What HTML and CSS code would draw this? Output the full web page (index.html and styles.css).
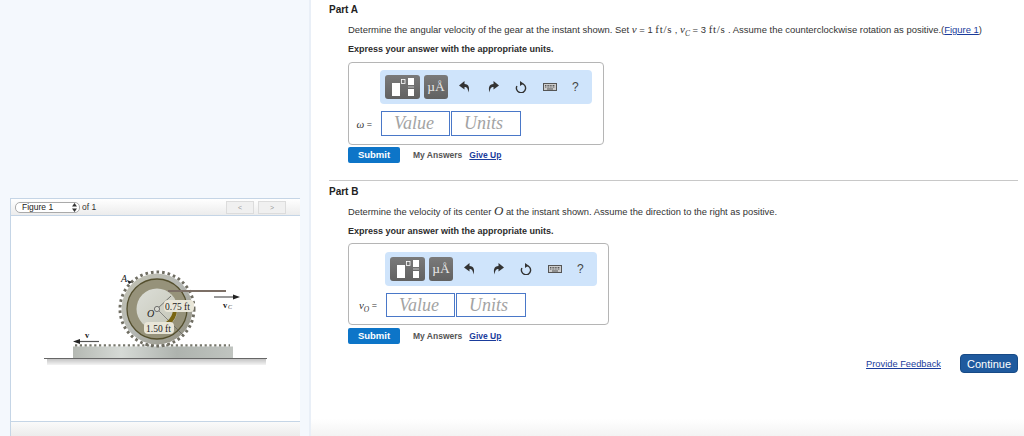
FILE: index.html
```html
<!DOCTYPE html>
<html lang="en">
<head>
  <meta charset="UTF-8" />
  <title>Part A</title>
  <link rel="stylesheet" href="styles.css">
</head>
<body>
  <aside class="figure-panel">
    <div class="figure-bar">
      <div class="figure-select">Figure 1
        <svg class="select-arrows" width="5" height="9" viewBox="0 0 5 9"><path d="M2.5 0 5 3.500H0zM2.500 9 0 5.500h5z" fill="#333"/></svg>
      </div>
      <span class="figure-of">of 1</span>
      <div class="figure-nav">
        <span class="nav-btn">&lt;</span>
        <span class="nav-btn">&gt;</span>
      </div>
    </div>
    <div class="figure-image">
      <svg width="290" height="205" viewBox="10 217 290 205">
        <defs>
          <linearGradient id="rackFill" x1="0" x2="1" y1="0" y2="0">
            <stop offset="0" stop-color="#b4b8b2"/>
            <stop offset="0.3" stop-color="#d6dad6"/>
            <stop offset="0.65" stop-color="#aeb3ae"/>
            <stop offset="1" stop-color="#c0c4c0"/>
          </linearGradient>
          <linearGradient id="groundFill" x1="0" x2="0" y1="0" y2="1">
            <stop offset="0" stop-color="#c4c4c4"/>
            <stop offset="1" stop-color="#f4f4f4"/>
          </linearGradient>
          <linearGradient id="gearFill" x1="0" x2="1" y1="0" y2="1">
            <stop offset="0" stop-color="#c2c1b0"/>
            <stop offset="0.5" stop-color="#b5b8b4"/>
            <stop offset="1" stop-color="#8d8a78"/>
          </linearGradient>
          <linearGradient id="hubFill" x1="0" x2="1" y1="0" y2="1">
            <stop offset="0" stop-color="#dcded8"/>
            <stop offset="1" stop-color="#c4c5b6"/>
          </linearGradient>
        </defs>
        <!-- ground and rack -->
        <rect x="46" y="360" width="219" height="6" fill="url(#groundFill)"/>
        <line x1="43" y1="359.500" x2="266" y2="359.500" stroke="#666"/>
        <line x1="74" y1="346.500" x2="229" y2="346.500" stroke="#77776c" stroke-width="2.500" stroke-dasharray="2.200 2.600"/>
        <rect x="72" y="347.500" width="160" height="11.500" fill="url(#rackFill)"/>
        <!-- gear -->
        <circle cx="156" cy="310" r="37" fill="none" stroke="#6f6d62" stroke-width="3" stroke-dasharray="2.600 3"/>
        <circle cx="156" cy="310" r="35.500" fill="url(#gearFill)"/>
        <circle cx="156" cy="310" r="30" fill="#96927a" stroke="#544f2e" stroke-width="1.300"/>
        <circle cx="156" cy="310" r="20.500" fill="url(#hubFill)"/>
        <path d="M176 310a20 20 0 0 1-8 16l-3-3a16 16 0 0 0 7-13z" fill="#7a6510"/>
        <line x1="167" y1="292" x2="225" y2="292" stroke="#7c6f66" stroke-width="2"/>
        <line x1="156" y1="310" x2="170" y2="297" stroke="#333" stroke-width="0.600"/>
        <line x1="156" y1="310" x2="182" y2="336" stroke="#555" stroke-width="0.600"/>
        <circle cx="156" cy="310" r="2.600" fill="#d9dad2" stroke="#555" stroke-width="0.800"/>
        <rect x="163" y="301" width="30" height="12" rx="4" fill="#e9e6d8"/>
        <rect x="143" y="323" width="30" height="12" rx="4" fill="#e9e6d8"/>
        <text class="fig-label" x="164" y="310.500">0.75 ft</text>
        <text class="fig-label" x="145" y="332.500">1.50 ft</text>
        <text class="fig-italic" x="146" y="318">O</text>
        <text class="fig-italic" x="120" y="283">A</text>
        <path d="M126 281l5 2-3 2z" fill="#222"/>
        <!-- velocity arrows -->
        <line x1="213" y1="298" x2="232" y2="298" stroke="#555" stroke-width="1.200"/>
        <path d="M232 295.500l7 2.500-7 2.500z" fill="#222"/>
        <text class="fig-bold" x="222" y="309">v</text>
        <text class="fig-sub" x="227" y="310">C</text>
        <line x1="79" y1="342.500" x2="98" y2="342.500" stroke="#555" stroke-width="1.200"/>
        <path d="M79 340l-7 2.500 7 2.500z" fill="#222"/>
        <text class="fig-bold" x="84" y="339">v</text>
      </svg>
    </div>
    <div class="figure-foot"></div>
  </aside>

  <main class="main">
    <section class="part part-a">
      <h2>Part A</h2>
      <div class="part-body">
        <p class="question">Determine the angular velocity of the gear at the instant shown. Set <i class="math">v</i> = 1 <span class="math math-unit">ft/s</span> , <i class="math">v<sub>C</sub></i> = 3 <span class="math math-unit">ft/s</span> . Assume the counterclockwise rotation as positive.(<a href="#">Figure 1</a>)</p>
        <p class="instruction">Express your answer with the appropriate units.</p>
        <div class="answer-box">
          <div class="toolbar">
            <span class="tool-btn tool-template">
              <svg width="22" height="18" viewBox="0 0 22 18"><path d="M0 5h8v13H0zM16 0h6v7h-6zM16 11h6v7h-6z" fill="#fff"/><rect x="9.500" y="1.500" width="3.500" height="4" fill="none" stroke="#fff" stroke-width="0.800"/><path d="M16 9h6" stroke="#ddd" stroke-width="0.800"/></svg>
            </span>
            <span class="tool-btn tool-units">µÅ</span>
            <svg class="tool-icon" width="12" height="12" viewBox="0 0 12 12"><path d="M5.500 0 0 4.500 5.500 8.500V6c2.500 0 3.500 1.500 3.800 5.500C11 7 10 3.200 5.500 3z" fill="#333"/></svg>
            <svg class="tool-icon" width="12" height="12" viewBox="0 0 12 12"><path d="M6.500 0 12 4.500 6.500 8.500V6C4 6 3 7.500 2.700 11.500 1 7 2 3.200 6.500 3z" fill="#333"/></svg>
            <svg class="tool-icon" width="12" height="12" viewBox="0 0 12 12"><path d="M6 2.500a4.600 4.600 0 1 1-4.100 2.500" fill="none" stroke="#333" stroke-width="1.400"/><path d="M5 0l3.500 2.500L5 5z" fill="#333"/></svg>
            <svg class="tool-icon" width="14" height="8" viewBox="0 0 14 8"><rect x=".5" y=".5" width="13" height="7" fill="#ccc" stroke="#555"/><path d="M2 2.500h10M2 4h10" stroke="#555" stroke-dasharray="1 .6"/><path d="M4 6h6" stroke="#555"/></svg>
            <span class="tool-help">?</span>
          </div>
          <label class="answer-label"><i class="math">ω</i> =</label>
          <div class="answer-inputs">
            <span class="answer-input">Value</span>
            <span class="answer-input">Units</span>
          </div>
        </div>
        <div class="actions">
          <button class="submit">Submit</button>
          <span class="my-answers">My Answers</span>
          <a class="give-up" href="#">Give Up</a>
        </div>
      </div>
    </section>

    <section class="part part-b">
      <h2>Part B</h2>
      <div class="part-body">
        <p class="question">Determine the velocity of its center <i class="math math-big">O</i> at the instant shown. Assume the direction to the right as positive.</p>
        <p class="instruction">Express your answer with the appropriate units.</p>
        <div class="answer-box answer-box-wide">
          <div class="toolbar">
            <span class="tool-btn tool-template">
              <svg width="22" height="18" viewBox="0 0 22 18"><path d="M0 5h8v13H0zM16 0h6v7h-6zM16 11h6v7h-6z" fill="#fff"/><rect x="9.500" y="1.500" width="3.500" height="4" fill="none" stroke="#fff" stroke-width="0.800"/><path d="M16 9h6" stroke="#ddd" stroke-width="0.800"/></svg>
            </span>
            <span class="tool-btn tool-units">µÅ</span>
            <svg class="tool-icon" width="12" height="12" viewBox="0 0 12 12"><path d="M5.500 0 0 4.500 5.500 8.500V6c2.500 0 3.500 1.500 3.800 5.500C11 7 10 3.200 5.500 3z" fill="#333"/></svg>
            <svg class="tool-icon" width="12" height="12" viewBox="0 0 12 12"><path d="M6.500 0 12 4.500 6.500 8.500V6C4 6 3 7.500 2.700 11.500 1 7 2 3.200 6.500 3z" fill="#333"/></svg>
            <svg class="tool-icon" width="12" height="12" viewBox="0 0 12 12"><path d="M6 2.500a4.600 4.600 0 1 1-4.100 2.500" fill="none" stroke="#333" stroke-width="1.400"/><path d="M5 0l3.500 2.500L5 5z" fill="#333"/></svg>
            <svg class="tool-icon" width="14" height="8" viewBox="0 0 14 8"><rect x=".5" y=".5" width="13" height="7" fill="#ccc" stroke="#555"/><path d="M2 2.500h10M2 4h10" stroke="#555" stroke-dasharray="1 .6"/><path d="M4 6h6" stroke="#555"/></svg>
            <span class="tool-help">?</span>
          </div>
          <label class="answer-label"><i class="math">v<sub>O</sub></i> =</label>
          <div class="answer-inputs">
            <span class="answer-input">Value</span>
            <span class="answer-input">Units</span>
          </div>
        </div>
        <div class="actions">
          <button class="submit">Submit</button>
          <span class="my-answers">My Answers</span>
          <a class="give-up" href="#">Give Up</a>
        </div>
      </div>
    </section>

    <div class="page-foot">
      <a class="feedback" href="#">Provide Feedback</a>
      <button class="continue">Continue</button>
    </div>
  </main>
</body>
</html>
```

FILE: styles.css
```css
* {
  margin: 0;
  padding: 0;
  box-sizing: border-box;
}

html, body {
  height: 436px;
  overflow: hidden;
}

body {
  display: flex;
  font-family: "Liberation Sans", Arial, sans-serif;
  color: #333;
  background: #fff;
}

a {
  color: #1a3c9c;
}

/* Left column with the figure */
.figure-panel {
  width: 311px;
  flex: none;
  padding: 198px 9px 0 10px;
  background: #f4f8fd;
  border-right: 2px solid #e9eff7;
}

.figure-bar {
  height: 18px;
  display: flex;
  align-items: center;
  padding-left: 4px;
  background: linear-gradient(to bottom, #fff, #ececec);
  border: 1px solid #c5d5e6;
  border-right: none;
  font-size: 8.5px;
}

.figure-select {
  width: 65px;
  height: 11px;
  display: flex;
  align-items: center;
  justify-content: space-between;
  padding: 0 2px 0 6px;
  background: #fff;
  border: 1px solid #aaa;
  border-radius: 5px;
  color: #222;
}

.figure-of {
  margin-left: 2px;
}

.figure-nav {
  display: flex;
  gap: 4px;
  margin-left: auto;
  margin-right: 14px;
}

.nav-btn {
  width: 28px;
  height: 13px;
  display: flex;
  align-items: center;
  justify-content: center;
  background: #f0f0f0;
  border: 1px solid #dcdcdc;
  color: #999;
  font-size: 7px;
}

.figure-image {
  height: 206px;
  background: #fff;
  border-left: 1px solid #c5d5e6;
  border-bottom: 1px solid #c5d5e6;
}

.figure-image svg {
  display: block;
}

.figure-foot {
  height: 14px;
  background: linear-gradient(to bottom, #fafafa, #ececec);
  border-left: 1px solid #c5d5e6;
}

.fig-label {
  font-family: "Liberation Serif", serif;
  font-size: 9.500px;
  fill: #222;
}

.fig-italic {
  font-family: "Liberation Serif", serif;
  font-style: italic;
  font-size: 10px;
  fill: #222;
}

.fig-bold {
  font-family: "Liberation Serif", serif;
  font-weight: bold;
  font-size: 8.500px;
  fill: #222;
}

.fig-sub {
  font-family: "Liberation Serif", serif;
  font-style: italic;
  font-size: 6px;
  fill: #222;
}

/* Right column */
.main {
  flex: 1;
  padding: 0 6px 0 18px;
  background: linear-gradient(to bottom, #fff 96%, #f3f3f3);
}

.part h2 {
  font-size: 10px;
  line-height: 12px;
  font-weight: bold;
  color: #222;
}

.part-a {
  padding-top: 4px;
}

.part-b {
  margin-top: 17px;
  padding-top: 5px;
  border-top: 1px solid #c8c8c8;
}

.part-body {
  padding-left: 19px;
}

.question {
  margin-top: 7px;
  height: 12px;
  font-size: 9.350px;
  line-height: 12px;
  white-space: nowrap;
}

.part-a .question {
  font-size: 9.450px;
}

.part-b .question {
  margin-top: 8px;
}

.math {
  font-family: "Liberation Serif", serif;
  font-size: 11px;
}

.math sub {
  font-size: 7.500px;
  line-height: 0;
}

.math-unit {
  letter-spacing: 0.700px;
}

.math-big {
  font-size: 13px;
  line-height: 10px;
}

.instruction {
  margin-top: 8px;
  font-size: 9px;
  line-height: 12px;
  font-weight: bold;
  color: #2c2c2c;
}

.part-b .instruction {
  margin-top: 7px;
}

.answer-box {
  width: 256px;
  height: 83px;
  margin-top: 7px;
  display: grid;
  grid-template-columns: 32px auto;
  grid-template-rows: 34px auto;
  row-gap: 7px;
  align-content: start;
  justify-content: start;
  padding-top: 7px;
  background: #fff;
  border: 1px solid #b5b5b5;
  border-radius: 4px;
}

.answer-box-wide {
  width: 261px;
  height: 82px;
  margin-top: 6px;
  padding-top: 8px;
  grid-template-columns: 37px auto;
}

.toolbar {
  grid-column: 2;
  width: 212px;
  height: 34px;
  margin-left: -1px;
  display: flex;
  align-items: center;
  padding-left: 5px;
  background: #cfe4fb;
  border-radius: 4px;
}

.tool-btn {
  height: 24px;
  display: flex;
  align-items: center;
  justify-content: center;
  background: linear-gradient(to bottom, #7a7a7a, #616161);
  border-radius: 3px;
  color: #e8e8e8;
}

.tool-template {
  width: 35px;
}

.tool-units {
  width: 24px;
  margin-left: 4px;
  font-family: "Liberation Serif", serif;
  font-size: 13.500px;
}

.tool-icon {
  margin-left: 16px;
  flex: none;
}

.tool-units + .tool-icon {
  margin-left: 11px;
}

.tool-help {
  margin-left: 15px;
  font-size: 12px;
  color: #444;
}

.answer-label {
  grid-column: 1;
  display: flex;
  align-items: center;
  justify-content: flex-end;
  padding-right: 9px;
  font-size: 9px;
  white-space: pre;
}

.answer-inputs {
  grid-column: 2;
  display: flex;
  gap: 1px;
}

.answer-input {
  width: 69px;
  height: 25px;
  display: flex;
  align-items: center;
  padding-left: 12px;
  border: 1px solid #4a78c8;
  font-family: "Liberation Serif", serif;
  font-style: italic;
  font-size: 18px;
  color: #a3a3a3;
  background: #fff;
}

.answer-input + .answer-input {
  width: 70px;
}

.answer-box-wide .answer-input {
  height: 24px;
}

.actions {
  margin-top: 2px;
  display: flex;
  align-items: center;
  height: 17px;
}

.part-a .actions {
  margin-top: 1px;
}

.submit {
  width: 52px;
  height: 16px;
  background: #0d75c8;
  border: none;
  border-radius: 2px;
  color: #fff;
  font-family: inherit;
  font-size: 9.500px;
  font-weight: bold;
}

.my-answers {
  margin-left: 13px;
  font-size: 8.500px;
  font-weight: bold;
  color: #555;
}

.give-up {
  margin-left: 7px;
  font-size: 8.500px;
  font-weight: bold;
}

.page-foot {
  margin-top: 10px;
  display: flex;
  align-items: center;
  justify-content: flex-end;
}

.feedback {
  font-size: 9.300px;
}

.continue {
  width: 58px;
  height: 19px;
  margin-left: 19px;
  background: #1f5a9e;
  border: 1px solid #174a86;
  border-radius: 4px;
  color: #fff;
  font-family: inherit;
  font-size: 11px;
}
```
